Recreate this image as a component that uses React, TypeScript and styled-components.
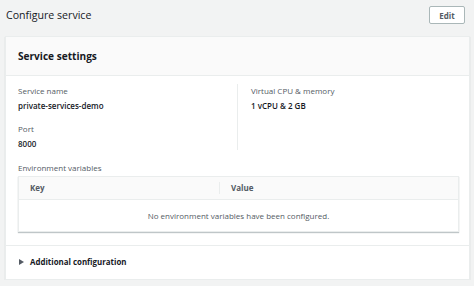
import React, { ReactElement } from 'react';
import styled, { createGlobalStyle } from 'styled-components';

const colors = {
  page: '#f2f3f3',
  text: '#16191f',
  label: '#545b64',
  border: '#eaeded',
  headerBg: '#fafafa',
};

const GlobalStyle = createGlobalStyle`
  html, body {
    margin: 0;
    padding: 0;
    background: ${colors.page};
    font-family: "Open Sans", "Noto Sans", sans-serif;
    color: ${colors.text};
  }
`;

const Page = styled.div`
  padding: 6px 6px 0 5px;
`;

const TopBar = styled.div`
  display: flex;
  align-items: center;
  justify-content: space-between;
  height: 18px;
  padding-left: 1px;
  margin-right: 3px;
  margin-bottom: 12px;
`;

const Title = styled.h2`
  margin: 0;
  font-size: 10.6px;
  font-weight: 400;
`;

const Button = styled.button`
  width: 36px;
  height: 18px;
  padding: 0;
  border: 1px solid #aab7b8;
  border-radius: 2px;
  background: #fff;
  color: ${colors.label};
  font-family: inherit;
  font-size: 8px;
  font-weight: 700;
`;

const Card = styled.section`
  width: 463px;
  background: #fff;
  border: 1px solid ${colors.border};
  box-shadow: 0 1px 1px rgba(0, 28, 36, 0.2);
`;

const CardHeader = styled.div`
  height: 38px;
  display: flex;
  align-items: center;
  padding-left: 12px;
  background: ${colors.headerBg};
  border-bottom: 1px solid ${colors.border};
  font-size: 10.1px;
  font-weight: 700;
`;

const CardBody = styled.div`
  padding: 8px 10px 13px 12px;
`;

const Columns = styled.div`
  display: grid;
  grid-template-columns: 219px 1fr;
  align-items: start;
`;

const Column = styled.div<{ $divided?: boolean }>`
  display: flex;
  flex-direction: column;
  gap: 10px;
  ${({ $divided }) =>
    $divided &&
    `
    border-left: 1px solid ${colors.border};
    padding-left: 13px;
    height: 66px;
  `}
`;

const Field = styled.div`
  display: flex;
  flex-direction: column;
  gap: 2px;
`;

const Label = styled.span`
  font-size: 8px;
  line-height: 13px;
  color: ${colors.label};
`;

const Value = styled.span`
  font-size: 8px;
  line-height: 13px;
  font-weight: 600;
  color: ${colors.text};
`;

const EnvLabel = styled(Label)`
  display: block;
  margin-top: 11px;
  margin-bottom: 2px;
`;

const Table = styled.div`
  border: 1px solid ${colors.border};
  box-shadow: 0 1px 1px rgba(0, 28, 36, 0.25);
`;

const HeadRow = styled.div`
  display: grid;
  grid-template-columns: 200px 1fr;
  height: 22px;
  align-items: center;
  background: ${colors.headerBg};
  border-bottom: 1px solid ${colors.border};
`;

const HeadCell = styled.div<{ $first?: boolean }>`
  font-size: 8px;
  font-weight: 700;
  color: ${colors.label};
  padding-left: 11px;
  border-left: ${({ $first }) => ($first ? 'none' : `1px solid ${colors.border}`)};
  line-height: 12px;
`;

const Empty = styled.div`
  height: 31px;
  display: flex;
  align-items: center;
  justify-content: center;
  font-size: 8px;
  color: ${colors.label};
`;

const Footer = styled.div`
  display: flex;
  align-items: center;
  gap: 6px;
  height: 34px;
  padding-left: 13px;
  padding-bottom: 1px;
  box-sizing: border-box;
  border-top: 1px solid ${colors.border};
  font-size: 7.9px;
  font-weight: 700;
  color: ${colors.text};
`;

const Caret = styled.span`
  width: 0;
  height: 0;
  border-top: 3.5px solid transparent;
  border-bottom: 3.5px solid transparent;
  border-left: 5px solid ${colors.label};
`;

type FieldProps = { label: string; value: string };

const InfoField = ({ label, value }: FieldProps): ReactElement => (
  <Field>
    <Label>{label}</Label>
    <Value>{value}</Value>
  </Field>
);

const App = (): ReactElement => (
  <>
    <GlobalStyle />
    <Page>
      <TopBar>
        <Title>Configure service</Title>
        <Button>Edit</Button>
      </TopBar>
      <Card>
        <CardHeader>Service settings</CardHeader>
        <CardBody>
          <Columns>
            <Column>
              <InfoField label="Service name" value="private-services-demo" />
              <InfoField label="Port" value="8000" />
            </Column>
            <Column $divided>
              <InfoField label="Virtual CPU & memory" value="1 vCPU & 2 GB" />
            </Column>
          </Columns>
          <EnvLabel>Environment variables</EnvLabel>
          <Table>
            <HeadRow>
              <HeadCell $first>Key</HeadCell>
              <HeadCell>Value</HeadCell>
            </HeadRow>
            <Empty>No environment variables have been configured.</Empty>
          </Table>
        </CardBody>
        <Footer>
          <Caret />
          Additional configuration
        </Footer>
      </Card>
    </Page>
  </>
);

export default App;
